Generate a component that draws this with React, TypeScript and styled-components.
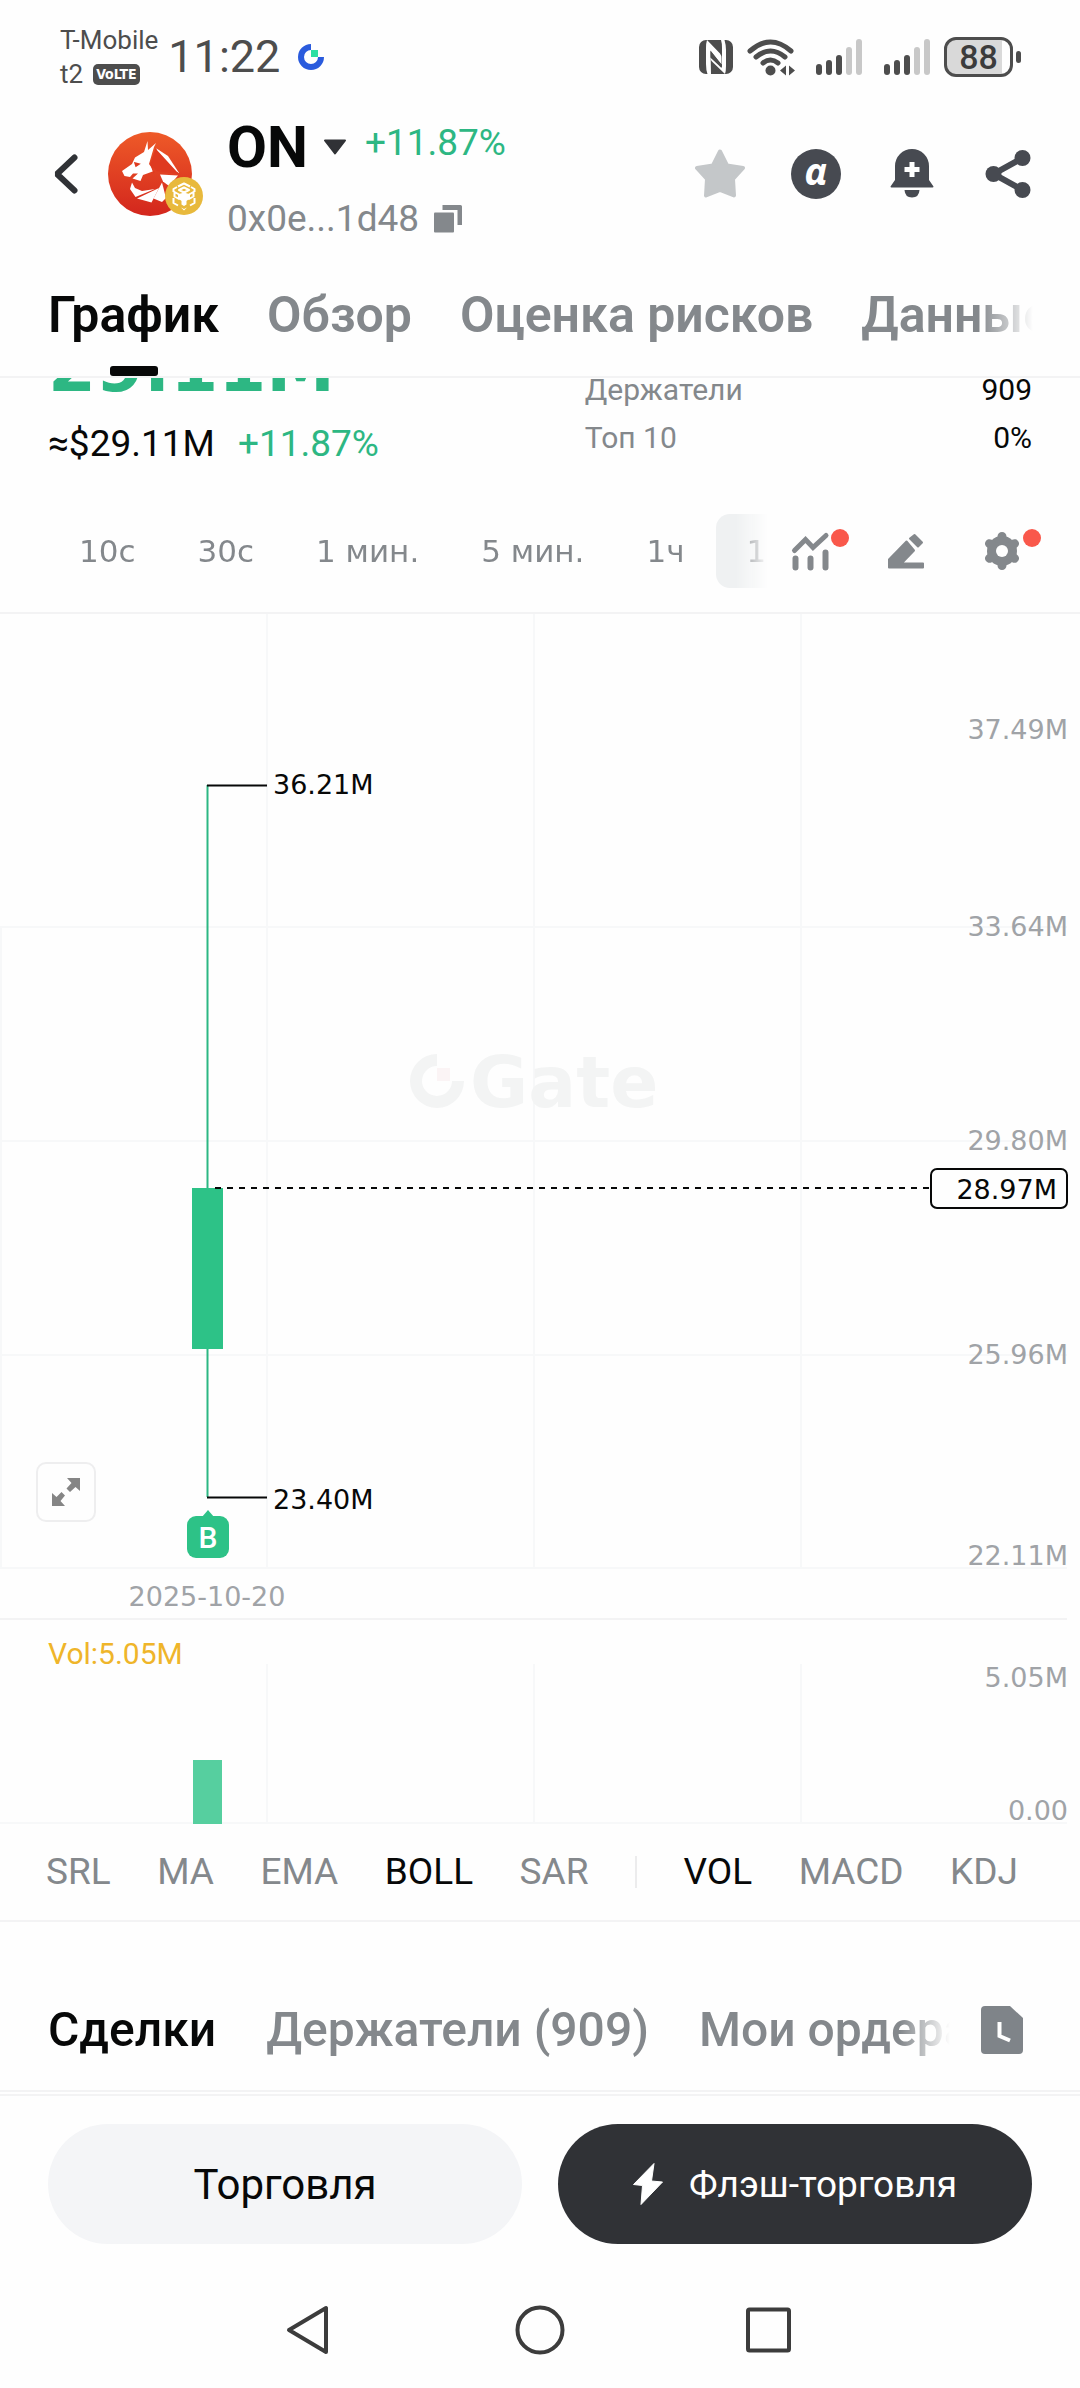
import React, { useState } from 'react';
import styled, { createGlobalStyle, css } from 'styled-components';

const colors = {
  page: '#fefefe',
  ink: '#070808',
  dark: '#303236',
  slate: '#474a51',
  status: '#4d4d4d',
  muted: '#84888c',
  axis: '#a0a3a7',
  line: '#f3f3f4',
  grid: '#f7f8f9',
  green: '#2db783',
  candle: '#2dc287',
  badge: '#f9584b',
};

const sans = 'Roboto, "Noto Sans", sans-serif';
const wide = '"DejaVu Sans", "Noto Sans", sans-serif';

const GlobalStyle = createGlobalStyle`
  * { box-sizing: border-box; }
  body { margin: 0; background: ${colors.page}; color: ${colors.ink}; font-family: ${sans}; }
  button { margin: 0; padding: 0; border: 0; background: none; color: inherit; font: inherit; cursor: pointer; }
  svg { display: block; flex: none; }
`;

const Page = styled.div`
  display: flex;
  flex-direction: column;
  overflow: hidden;
`;

/* ---------- status bar ---------- */

const StatusBar = styled.div`
  display: flex;
  align-items: center;
  padding: 23px 59px 16px 60px;
  color: ${colors.status};
`;

const Carriers = styled.div`
  font-size: 26px;
  line-height: 34px;
`;

const CarrierLine = styled.div`
  display: flex;
  align-items: center;
  gap: 10px;
`;

const VolteTag = styled.span`
  padding: 0 3px;
  border-radius: 5px;
  background: ${colors.status};
  color: #fff;
  font: 700 14px/21px "Liberation Sans Narrow", "DejaVu Sans Condensed", Roboto, sans-serif;
`;

const Clock = styled.time`
  margin: 0 18px 0 10px;
  font-size: 45px;
  line-height: 56px;
`;

const StatusIcons = styled.div`
  display: flex;
  align-items: center;
  gap: 14px;
  margin-left: auto;
`;

const SignalGroup = styled.div`
  display: flex;
  gap: 22px;
  margin-left: 7px;
`;

const Battery = styled.div`
  position: relative;
  display: flex;
  align-items: center;
  justify-content: center;
  width: 69px;
  height: 40px;
  margin-right: 8px;
  border: 3px solid ${colors.status};
  border-radius: 12px;
  background: linear-gradient(to right, #d9d9d9 88%, transparent 88%);
  color: #3c3c3c;
  font-size: 34px;
  font-weight: 500;
  line-height: 34px;

  &::after {
    content: '';
    position: absolute;
    right: -11px;
    top: 11px;
    width: 5px;
    height: 12px;
    border-radius: 3px;
    background: ${colors.status};
  }
`;

/* ---------- token header ---------- */

const Header = styled.header`
  display: flex;
  align-items: center;
  padding: 0 47px 0 48px;
`;

const BackButton = styled.button`
  margin-right: 24px;
`;

const TokenLogo = styled.div`
  position: relative;
`;

const ChainBadge = styled.div`
  position: absolute;
  right: -11px;
  bottom: 1px;
`;

const TokenTitle = styled.div`
  display: flex;
  flex-direction: column;
  gap: 16px;
  padding-top: 6px;
  margin-left: 35px;
`;

const SymbolRow = styled.div`
  display: flex;
  align-items: flex-start;
  gap: 18px;
`;

const SymbolButton = styled.button`
  display: flex;
  align-items: center;
  gap: 15px;
  font-size: 58px;
  font-weight: 700;
  line-height: 68px;
`;

const Change = styled.span`
  color: ${colors.green};
  font-size: 37px;
  line-height: 60px;
`;

const AddressButton = styled.button`
  display: flex;
  align-items: center;
  gap: 15px;
  color: ${colors.muted};
  font-size: 37px;
  line-height: 44px;
`;

const HeaderActions = styled.div`
  display: flex;
  gap: 46px;
  margin-left: auto;
`;

/* ---------- tabs ---------- */

const TabList = styled.div<{ $fade: number; $gap: number }>`
  display: flex;
  flex: 1;
  min-width: 0;
  gap: ${(p) => p.$gap}px;
  overflow: hidden;
  mask-image: linear-gradient(to left, transparent, #000 ${(p) => p.$fade}px);
`;

const TopTabs = styled.nav`
  display: flex;
  padding: 44px 47px 0 48px;
  border-bottom: 2px solid ${colors.line};
`;

const TopTab = styled.button<{ $active: boolean }>`
  display: flex;
  flex: none;
  flex-direction: column;
  align-items: center;
  gap: 21px;
  color: ${(p) => (p.$active ? colors.ink : colors.muted)};
  font-size: 50px;
  font-weight: 600;
  line-height: 60px;

  &::after {
    content: '';
    width: 48px;
    height: 10px;
    border-radius: 3px;
    background: ${(p) => (p.$active ? colors.ink : 'transparent')};
  }
`;

/* ---------- price summary ---------- */

const Scroller = styled.main`
  overflow: hidden;
`;

const Summary = styled.section`
  display: grid;
  grid-template-columns: 6fr 5fr;
  align-items: end;
  margin-top: -51px;
  padding: 0 48px;
`;

const BigPrice = styled.div`
  color: ${colors.green};
  font: 700 69px/80px ${wide};
`;

const SubPrice = styled.div`
  display: flex;
  gap: 23px;
  margin-top: 7px;
  font-size: 37px;
  line-height: 60px;
`;

const Facts = styled.dl`
  margin: 0;
  padding-bottom: 12px;
`;

const Fact = styled.div`
  display: flex;
  justify-content: space-between;
  font-size: 30px;
  line-height: 48px;

  dt { color: ${colors.muted}; }
  dd { margin: 0; }
`;

/* ---------- chart toolbar ---------- */

const Toolbar = styled.div`
  display: flex;
  align-items: center;
  padding: 40px 54px 24px 48px;
  border-bottom: 2px solid ${colors.line};
`;

const Interval = styled.button<{ $active: boolean }>`
  flex: none;
  padding: 0 31px;
  border-radius: 14px;
  color: ${colors.muted};
  font: 400 31px/74px ${wide};
  ${(p) => p.$active && css`background: #eff1f2;`}
`;

const Tools = styled.div`
  display: flex;
  gap: 48px;
  margin-left: 18px;
`;

const ToolButton = styled.button<{ $dot?: boolean }>`
  position: relative;
  color: ${colors.muted};

  ${(p) => p.$dot && css`
    &::after {
      content: '';
      position: absolute;
      left: 45px;
      top: 2px;
      width: 18px;
      height: 18px;
      border-radius: 50%;
      background: ${colors.badge};
    }
  `}
`;

/* ---------- chart ---------- */

const ChartArea = styled.section`
  position: relative;

  > svg { width: 100%; height: auto; }
`;

const ExpandButton = styled.button`
  position: absolute;
  left: 36px;
  bottom: 25%;
  display: grid;
  place-items: center;
  width: 60px;
  height: 60px;
  border: 2px solid #eeeeef;
  border-radius: 10px;
  background: ${colors.page};
`;

/* ---------- indicators ---------- */

const Indicators = styled.div`
  display: flex;
  align-items: center;
  justify-content: space-between;
  padding: 0 62px 0 46px;
  border-bottom: 2px solid ${colors.line};
`;

const Indicator = styled.button<{ $active: boolean }>`
  color: ${(p) => (p.$active ? colors.ink : colors.muted)};
  font-size: 37px;
  line-height: 96px;
`;

const Divider = styled.span`
  width: 2px;
  height: 32px;
  background: #ececed;
`;

/* ---------- orders and footer ---------- */

const OrdersBar = styled.div`
  display: flex;
  align-items: center;
  gap: 31px;
  padding: 78px 57px 30px 48px;
  border-bottom: 2px solid ${colors.line};
`;

const OrdersTab = styled.button<{ $active: boolean }>`
  flex: none;
  color: ${(p) => (p.$active ? colors.ink : colors.muted)};
  font-size: 48px;
  font-weight: 500;
  line-height: 60px;
`;

const Footer = styled.footer`
  display: flex;
  gap: 36px;
  margin-top: 2px;
  padding: 28px 48px 0;
  border-top: 2px solid ${colors.line};
`;

const TradeButton = styled.button<{ $dark?: boolean }>`
  display: flex;
  flex: 1;
  align-items: center;
  justify-content: center;
  gap: 26px;
  height: 120px;
  border-radius: 60px;
  background: ${(p) => (p.$dark ? colors.dark : '#f4f5f7')};
  color: ${(p) => (p.$dark ? '#fff' : colors.ink)};
  font-size: ${(p) => (p.$dark ? 37 : 42)}px;
`;

const SystemNav = styled.nav`
  display: flex;
  justify-content: center;
  gap: 180px;
  padding: 61px 0 33px;
`;

/* ---------- drawings ---------- */

const GateMark = () => (
  <svg width="26" height="26" viewBox="0 0 26 26" aria-hidden="true">
    <path d="M13 0A13 13 0 1 0 26 13H20A7 7 0 1 1 13 6Z" fill="#2a5bdd" />
    <path d="M13 6h7v7h-7z" fill="#2bdfa3" />
  </svg>
);

const NfcIcon = () => (
  <svg width="34" height="34" viewBox="0 0 34 34" aria-label="NFC">
    <rect width="34" height="34" rx="7" fill={colors.status} />
    <path d="M8 0L21 13.500Q22.500 15.500 22.500 18V24.500L11.500 10.500L12 34H8.500Q7 30 7 24V8Q7 3 8 0Z" fill="#fff" />
    <path d="M22 0H25.500Q27 5 27 10V26Q27 31 26 34L13 21.500Q11.500 20 11.500 17.500L23 27.500V8Q23 3 22 0Z" fill="#fff" />
    <path d="M11.500 11L22.500 24.500V28L11.500 17.500Z" fill={colors.status} />
  </svg>
);

const WifiIcon = () => (
  <svg width="48" height="37" viewBox="0 0 48 37" aria-label="Wi-Fi" fill="none" stroke={colors.status} strokeWidth="5" strokeLinecap="round">
    <path d="M3 12Q23.500-6 44 12" />
    <path d="M9 18Q23.500 6 38 18" />
    <path d="M16 24Q23.500 18 31 24" />
    <circle cx="23.500" cy="31.500" r="5" fill={colors.status} stroke="none" />
    <path d="M33 31.500L39 26.500V36.500ZM42 26.500L48 31.500L42 36.500Z" fill={colors.status} stroke="none" />
  </svg>
);

const SignalIcon = () => (
  <svg width="46" height="36" viewBox="0 0 46 36" aria-label="Сигнал">
    {[11, 15, 20, 28, 36].map((h, i) => (
      <rect key={h} x={i * 10} y={36 - h} width="6" height={h} rx="3" fill={i < 3 ? colors.status : '#c8c8c8'} />
    ))}
  </svg>
);

const BackIcon = () => (
  <svg width="36" height="46" viewBox="0 0 36 46" fill="none" stroke={colors.dark} strokeWidth="6" strokeLinejoin="bevel" strokeLinecap="round">
    <path d="M26.500 6.500L9 23L26.500 39.500" />
  </svg>
);

const DragonLogo = () => (
  <svg width="84" height="84" viewBox="0 0 84 84" aria-label="ON">
    <defs>
      <linearGradient id="dragon" x1="0" y1="0" x2="0" y2="1">
        <stop offset="0" stopColor="#ee5a28" />
        <stop offset="1" stopColor="#d3261d" />
      </linearGradient>
    </defs>
    <circle cx="42" cy="42" r="42" fill="url(#dragon)" />
    <g fill="#fff">
      <path d="M39.500 9L36 20L27 25.500L24 32L14 39L16.500 44L22 45L25 41.500L30 41.500L24.500 46.500L32.500 49L35 43L46 39L41 32L46 15L48 11L40 18Z" />
      <path d="M48.500 16.500L60 24L71 41L49 38.500L43 32Z" />
      <path d="M52 42.500L70 43.500L61 54L55 49.500Z" />
      <path d="M54 50.500L58 66L54 70L45.500 66.500Z" />
      <path d="M51 56L43.500 70.500L29 66.500Z" />
      <path d="M24 50.500L22 57L27.500 65L47 57L34 59L27 56Z" />
    </g>
    <path d="M48 17L43 32L49 38.500L70 41M43 32L46 41M27 31l4 1-3 2z" fill="#df3a20" stroke="#df3a20" strokeWidth="1.500" />
  </svg>
);

const BnbBadge = () => (
  <svg width="38" height="38" viewBox="0 0 38 38" aria-hidden="true">
    <circle cx="19" cy="19" r="19" fill="#e8b93c" />
    <g fill="none" stroke="#fff" strokeWidth="2" strokeLinejoin="round">
      <path d="M13 9.500L19 6.500L25 9.500M8.500 15V12L12 10M29.500 15V12L26 10M8.500 21V26L13 28.500M29.500 21V26L25 28.500" />
      <path d="M14 13L19 10.500L24 13L19 15.500Z" />
      <path d="M9.500 15L14 17.500V22L9.500 19.500ZM28.500 15L24 17.500V22L28.500 19.500Z" />
    </g>
    <path d="M14 17L19 15.500L24 17V22L21.500 24V27.500L19 29L16.500 27.500V24L14 22ZM16 30.500L19 32L22 30.500L19 33.500Z" fill="#fff" />
  </svg>
);

const CaretIcon = () => (
  <svg width="24" height="16" viewBox="0 0 24 16" fill={colors.dark} stroke={colors.dark} strokeWidth="2" strokeLinejoin="round">
    <path d="M2 1.500H22L12 14.500Z" />
  </svg>
);

const CopyIcon = () => (
  <svg width="28" height="28" viewBox="0 0 28 28" fill={colors.muted}>
    <rect y="7.500" width="20" height="20" rx="1" />
    <path d="M8.500 0H26.500Q28 0 28 1.500V20H23.500V5H8.500Z" />
  </svg>
);

const StarIcon = () => (
  <svg width="50" height="50" viewBox="0 0 50 50" fill="#c4c7c9" stroke="#c4c7c9" strokeWidth="4" strokeLinejoin="round">
    <path d="M25 2.500L32 16.500L48 19L38 30L39 46.500L25 41L11 46.500L12 30L2 19L18 16.500Z" />
  </svg>
);

const AlphaIcon = () => (
  <svg width="50" height="50" viewBox="0 0 50 50">
    <circle cx="25" cy="25" r="25" fill={colors.slate} />
    <text x="25" y="36" textAnchor="middle" fill="#fff" fontFamily="Noto Sans, sans-serif" fontStyle="italic" fontWeight="700" fontSize="38">α</text>
  </svg>
);

const BellIcon = () => (
  <svg width="50" height="50" viewBox="0 0 50 50" fill={colors.slate}>
    <path d="M8 17A17 17 0 0 1 42 17V31L46.500 37.500Q46.500 38.500 45.500 38.500H4.500Q3.500 38.500 3.500 37.500L8 31Z" />
    <path d="M17.500 41H32.500Q32 48.500 25 48.500T17.500 41Z" />
    <path d="M22.500 13h5v5h5v5h-5v5h-5v-5h-5v-5h5z" fill="#fff" />
  </svg>
);

const ShareIcon = () => (
  <svg width="50" height="50" viewBox="0 0 50 50" fill={colors.slate}>
    <path d="M39.500 9L10.500 25L39.500 41" fill="none" stroke={colors.slate} strokeWidth="6" />
    <circle cx="39.500" cy="9" r="8" />
    <circle cx="10.500" cy="25" r="8" />
    <circle cx="39.500" cy="41" r="8" />
  </svg>
);

const TrendIcon = () => (
  <svg width="48" height="48" viewBox="0 0 48 48" fill="none" stroke="currentColor" strokeWidth="5" strokeLinecap="round">
    <path d="M8.500 23.500L19.500 12.500L27 20.500L40 8.500" />
    <path d="M9.500 31.500V40.500M24.500 31.500V40.500M39.500 25.500V40.500" strokeWidth="6" />
  </svg>
);

const PencilIcon = () => (
  <svg width="48" height="48" viewBox="0 0 48 48" fill="currentColor" stroke="currentColor" strokeWidth="2" strokeLinejoin="round">
    <path d="M7 40.500V32.500L24.500 14.500L32 23.500L19.500 36.500H41V40.500Z" />
    <path d="M28 11.500L32.500 8L40 15.500L36 19.500Z" />
  </svg>
);

const GearIcon = () => (
  <svg width="48" height="48" viewBox="0 0 48 48" fill="currentColor">
    <circle cx="24" cy="24" r="15" />
    <path d="M24 9.500V38.500M11.500 16.700L36.500 31.300M36.500 16.700L11.500 31.300" stroke="currentColor" strokeWidth="9" strokeLinecap="round" />
    <circle cx="24" cy="24" r="6" fill={colors.page} />
  </svg>
);

const ExpandIcon = () => (
  <svg width="28" height="28" viewBox="0 0 28 28" fill="#858585">
    <path d="M15 0H28V13L23.500 9L18 14L14.500 10.500L19.500 5ZM13 28H0V15L4.500 19L9.500 14L13 17.500L8.500 23Z" />
  </svg>
);

const HistoryIcon = () => (
  <svg width="42" height="48" viewBox="0 0 42 48">
    <path d="M4 0H29L42 12V44Q42 48 38 48H4Q0 48 0 44V4Q0 0 4 0Z" fill="#7f8489" />
    <path d="M18.500 16V30L29 34.500" fill="none" stroke="#fff" strokeWidth="4" />
  </svg>
);

const BoltIcon = () => (
  <svg width="30" height="42" viewBox="0 0 30 42" fill="#fff" stroke="#fff" strokeLinejoin="round">
    <path d="M21 .500L18.500 18L29.500 19L8 41.500L9.500 22.500L.500 21.500Z" />
  </svg>
);

/* ---------- candle chart ---------- */

const verticals = [267, 534, 801];
const priceTicks = [
  { y: 125, label: '37.49M' },
  { y: 322, label: '33.64M' },
  { y: 536, label: '29.80M' },
  { y: 750, label: '25.96M' },
  { y: 951, label: '22.11M' },
];
const horizontals = [313, 527, 741, 954];

const ChartText = styled.text<{ $tone?: 'axis' | 'ink' }>`
  fill: ${(p) => (p.$tone === 'ink' ? colors.ink : colors.axis)};
  font: 400 27px ${wide};
`;

const Watermark = styled.text`
  fill: #f3f4f4;
  font: 700 71px ${wide};
`;

const VolumeText = styled.text`
  fill: #efb52a;
  font: 400 30px ${sans};
`;

const MarkerText = styled.text`
  fill: #fff;
  font: 500 30px ${sans};
`;

const CandleChart = () => (
  <svg viewBox="0 0 1080 1210" role="img" aria-label="График ON">
    <g stroke={colors.grid} strokeWidth="2">
      <path d="M1 313V954" />
      {verticals.map((x) => (
        <path key={x} d={`M${x} 0V954M${x} 1050V1209`} />
      ))}
      {horizontals.map((y) => (
        <path key={y} d={`M0 ${y}H1067`} />
      ))}
      <path d="M0 1005H1067" stroke={colors.line} />
      <path d="M0 1209H1067" />
    </g>

    <g transform="translate(410 440)">
      <path d="M27 0A27 27 0 1 0 54 27H42A15 15 0 1 1 27 12Z" fill="#f3f4f4" />
      <path d="M27 14h13v13h-13z" fill="#fbf4f5" />
    </g>
    <Watermark x="470" y="493">Gate</Watermark>

    {priceTicks.map((t) => (
      <ChartText key={t.label} x="1068" y={t.y} textAnchor="end">{t.label}</ChartText>
    ))}

    <path d="M207.500 171V883" stroke={colors.green} strokeWidth="2" />
    <rect x="192" y="574" width="31" height="161" fill={colors.candle} />
    <path d="M207 171.500H267M207 883.500H267" stroke={colors.ink} strokeWidth="2" />
    <ChartText $tone="ink" x="273" y="180">36.21M</ChartText>
    <ChartText $tone="ink" x="273" y="895">23.40M</ChartText>

    <path d="M215 574H930" stroke={colors.ink} strokeWidth="2" strokeDasharray="6 6" />
    <rect x="931" y="555" width="136" height="39" rx="6" fill={colors.page} stroke={colors.ink} strokeWidth="2" />
    <ChartText $tone="ink" x="1057" y="585" textAnchor="end">28.97M</ChartText>

    <path d="M208 896L214 903H202Z" fill={colors.candle} />
    <rect x="187" y="902" width="42" height="42" rx="9" fill={colors.candle} />
    <MarkerText x="208" y="934" textAnchor="middle">B</MarkerText>

    <ChartText x="207" y="992" textAnchor="middle">2025-10-20</ChartText>

    <VolumeText x="48" y="1050">Vol:5.05M</VolumeText>
    <rect x="193" y="1146" width="29" height="64" fill="#56cf9f" />
    <ChartText x="1068" y="1073" textAnchor="end">5.05M</ChartText>
    <ChartText x="1068" y="1206" textAnchor="end">0.00</ChartText>
  </svg>
);

/* ---------- data ---------- */

const topTabs = ['График', 'Обзор', 'Оценка рисков', 'Данные'];
const intervals = ['10с', '30с', '1 мин.', '5 мин.', '1ч', '1'];
const overlays = ['SRL', 'MA', 'EMA', 'BOLL', 'SAR'];
const oscillators = ['VOL', 'MACD', 'KDJ'];
const orderTabs = ['Сделки', 'Держатели (909)', 'Мои ордера'];

export default function App() {
  const [tab, setTab] = useState(topTabs[0]);
  const [interval, setInterval] = useState('1');
  const [overlay, setOverlay] = useState('BOLL');
  const [oscillator, setOscillator] = useState('VOL');
  const [orders, setOrders] = useState(orderTabs[0]);

  return (
    <Page>
      <GlobalStyle />

      <StatusBar>
        <Carriers>
          <CarrierLine>T-Mobile</CarrierLine>
          <CarrierLine>t2 <VolteTag>VoLTE</VolteTag></CarrierLine>
        </Carriers>
        <Clock>11:22</Clock>
        <GateMark />
        <StatusIcons>
          <NfcIcon />
          <WifiIcon />
          <SignalGroup><SignalIcon /><SignalIcon /></SignalGroup>
          <Battery>88</Battery>
        </StatusIcons>
      </StatusBar>

      <Header>
        <BackButton aria-label="Назад"><BackIcon /></BackButton>
        <TokenLogo>
          <DragonLogo />
          <ChainBadge><BnbBadge /></ChainBadge>
        </TokenLogo>
        <TokenTitle>
          <SymbolRow>
            <SymbolButton>ON <CaretIcon /></SymbolButton>
            <Change>+11.87%</Change>
          </SymbolRow>
          <AddressButton>0x0e...1d48 <CopyIcon /></AddressButton>
        </TokenTitle>
        <HeaderActions>
          <button aria-label="В избранное"><StarIcon /></button>
          <button aria-label="Alpha"><AlphaIcon /></button>
          <button aria-label="Добавить оповещение"><BellIcon /></button>
          <button aria-label="Поделиться"><ShareIcon /></button>
        </HeaderActions>
      </Header>

      <TopTabs>
        <TabList $fade={54} $gap={48}>
          {topTabs.map((t) => (
            <TopTab key={t} $active={t === tab} onClick={() => setTab(t)}>{t}</TopTab>
          ))}
        </TabList>
      </TopTabs>

      <Scroller>
        <Summary>
          <div>
            <BigPrice>29.11M</BigPrice>
            <SubPrice>≈$29.11M <Change>+11.87%</Change></SubPrice>
          </div>
          <Facts>
            <Fact><dt>Держатели</dt><dd>909</dd></Fact>
            <Fact><dt>Топ 10</dt><dd>0%</dd></Fact>
          </Facts>
        </Summary>

        <Toolbar>
          <TabList $fade={32} $gap={0}>
            {intervals.map((i) => (
              <Interval key={i} $active={i === interval} onClick={() => setInterval(i)}>{i}</Interval>
            ))}
          </TabList>
          <Tools>
            <ToolButton $dot aria-label="Индикаторы"><TrendIcon /></ToolButton>
            <ToolButton aria-label="Рисование"><PencilIcon /></ToolButton>
            <ToolButton $dot aria-label="Настройки"><GearIcon /></ToolButton>
          </Tools>
        </Toolbar>

        <ChartArea>
          <CandleChart />
          <ExpandButton aria-label="Развернуть"><ExpandIcon /></ExpandButton>
        </ChartArea>

        <Indicators>
          {overlays.map((name) => (
            <Indicator key={name} $active={name === overlay} onClick={() => setOverlay(name)}>{name}</Indicator>
          ))}
          <Divider />
          {oscillators.map((name) => (
            <Indicator key={name} $active={name === oscillator} onClick={() => setOscillator(name)}>{name}</Indicator>
          ))}
        </Indicators>

        <OrdersBar>
          <TabList $fade={50} $gap={50}>
            {orderTabs.map((t) => (
              <OrdersTab key={t} $active={t === orders} onClick={() => setOrders(t)}>{t}</OrdersTab>
            ))}
          </TabList>
          <button aria-label="История"><HistoryIcon /></button>
        </OrdersBar>
      </Scroller>

      <Footer>
        <TradeButton>Торговля</TradeButton>
        <TradeButton $dark><BoltIcon />Флэш-торговля</TradeButton>
      </Footer>

      <SystemNav>
        <button aria-label="Назад">
          <svg width="50" height="50" viewBox="0 0 50 50" fill="none" stroke="#3c3c3c" strokeWidth="4" strokeLinejoin="round">
            <path d="M4 25L41 3V47Z" />
          </svg>
        </button>
        <button aria-label="Домой">
          <svg width="50" height="50" viewBox="0 0 50 50" fill="none" stroke="#3c3c3c" strokeWidth="4">
            <circle cx="25" cy="25" r="22.500" />
          </svg>
        </button>
        <button aria-label="Недавние">
          <svg width="50" height="50" viewBox="0 0 50 50" fill="none" stroke="#3c3c3c" strokeWidth="4">
            <rect x="3" y="4.500" width="41" height="41" rx="1.500" />
          </svg>
        </button>
      </SystemNav>
    </Page>
  );
}
